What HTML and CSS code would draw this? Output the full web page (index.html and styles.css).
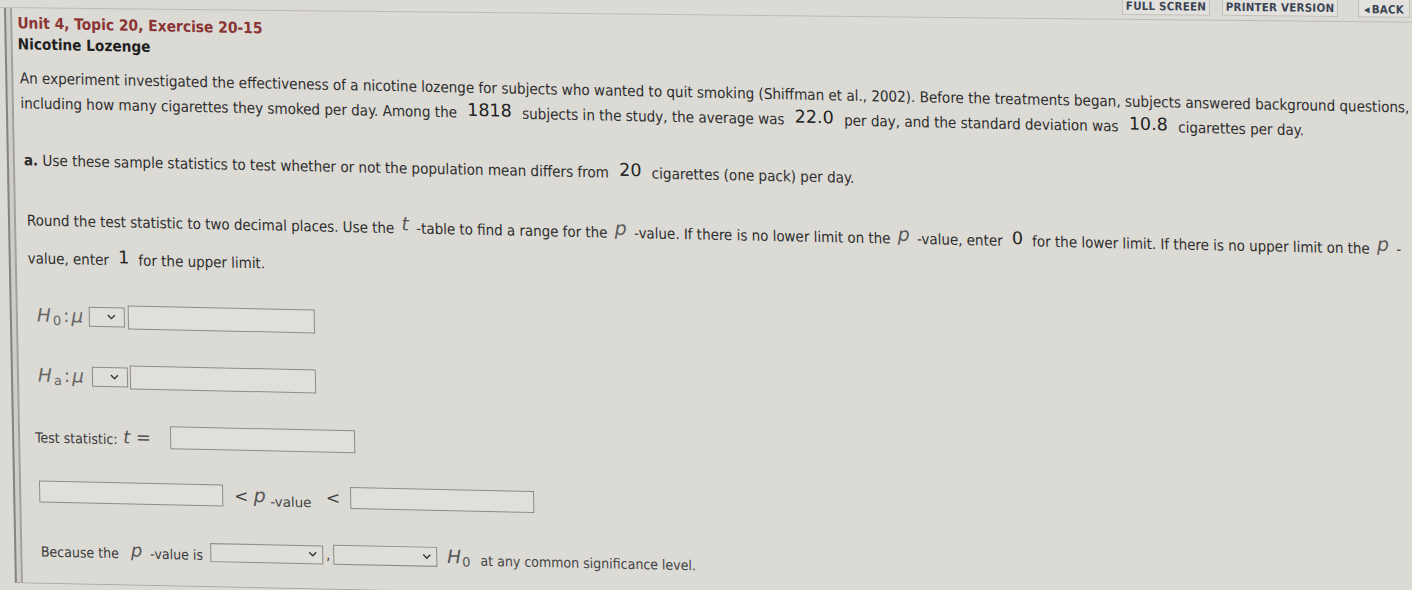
FILE: index.html
```html
<!DOCTYPE html>
<html lang="en">
<head>
<meta charset="utf-8">
<title>Unit 4, Topic 20, Exercise 20-15</title>
<link rel="stylesheet" href="styles.css">
</head>
<body>
<div class="topbar">
  <span class="tb-btn w-full">FULL SCREEN</span>
  <span class="tb-btn w-print">PRINTER VERSION</span>
  <span class="tb-btn w-back"><span class="tri">&#9664;</span>BACK</span>
</div>
<div class="panel">
  <div class="inner">
    <h1 class="unit">Unit 4, Topic 20, Exercise 20-15</h1>
    <h2 class="name">Nicotine Lozenge</h2>
    <p class="intro">An experiment investigated the effectiveness of a nicotine lozenge for subjects who wanted to quit smoking (Shiffman et al., 2002). Before the treatments began, subjects answered background questions,<br>including how many cigarettes they smoked per day. Among the <span class="num">1818</span> subjects in the study, the average was <span class="num">22.0</span> per day, and the standard deviation was <span class="num">10.8</span> cigarettes per day.</p>
    <p class="part"><b>a.</b> Use these sample statistics to test whether or not the population mean differs from <span class="num">20</span> cigarettes (one pack) per day.</p>
    <p class="instr">Round the test statistic to two decimal places. Use the <span class="mi">t</span> -table to find a range for the <span class="mi">p</span> -value. If there is no lower limit on the <span class="mi">p</span> -value, enter <span class="num">0</span> for the lower limit. If there is no upper limit on the <span class="mi">p</span> -<br>value, enter <span class="num">1</span> for the upper limit.</p>

    <div class="row row-h0">
      <span class="hyp lab-h0"><i>H</i><sub>0</sub>:<i>μ</i></span>
      <span class="drop d-small"><svg class="chev" width="9" height="6" viewBox="0 0 9 6"><polyline points="1,1 4.5,4.5 8,1" fill="none" stroke="#333" stroke-width="1.4"/></svg></span>
      <span class="box b-hyp"></span>
    </div>

    <div class="row row-ha">
      <span class="hyp lab-ha"><i>H</i><sub>a</sub>:<i>μ</i></span>
      <span class="drop d-small"><svg class="chev" width="9" height="6" viewBox="0 0 9 6"><polyline points="1,1 4.5,4.5 8,1" fill="none" stroke="#333" stroke-width="1.4"/></svg></span>
      <span class="box b-hyp"></span>
    </div>

    <div class="row row-t">
      <span class="lab-test">Test statistic:</span>
      <span class="teq"><i>t</i> =</span>
      <span class="box b-t"></span>
    </div>

    <div class="row row-p">
      <span class="box b-p"></span>
      <span class="pmid"><span class="lt">&lt;</span> <i class="pi">p</i> <span class="sub-val">-value</span> <span class="lt">&lt;</span></span>
      <span class="box b-p"></span>
    </div>

    <div class="row row-because">
      <span class="lab-because">Because the <i class="pi2">p</i> -value is</span>
      <span class="drop d-sel1"><svg class="chev" width="9" height="6" viewBox="0 0 9 6"><polyline points="1,1 4.5,4.5 8,1" fill="none" stroke="#333" stroke-width="1.4"/></svg></span>
      <span class="comma">,</span>
      <span class="drop d-sel2"><svg class="chev" width="9" height="6" viewBox="0 0 9 6"><polyline points="1,1 4.5,4.5 8,1" fill="none" stroke="#333" stroke-width="1.4"/></svg></span>
      <span class="hyp h-end"><i>H</i><sub>0</sub></span>
      <span class="tail">at any common significance level.</span>
    </div>
  </div>
</div>
</body>
</html>
```

FILE: styles.css
```css
html, body {
  margin: 0;
  padding: 0;
  overflow: hidden;
}
body {
  width: 1412px;
  height: 590px;
  background: #dcdad5;
  font-family: "DejaVu Sans Condensed", "DejaVu Sans", sans-serif;
  font-stretch: condensed;
  color: #2e2e2e;
}

/* top bar */
.topbar {
  height: 7px;
  border-bottom: 1px solid #bdbbb6;
  display: flex;
  justify-content: flex-end;
  align-items: flex-end;
  padding-right: 2px;
  transform: skewY(0.6deg);
  transform-origin: 0 0;
}
.tb-btn {
  height: 20px;
  margin-bottom: 4px;
  box-sizing: border-box;
  display: flex;
  align-items: center;
  justify-content: center;
  background: #e3e1dd;
  border: 1px solid #c2c0bb;
  border-top: none;
  font-size: 11.5px;
  font-weight: bold;
  color: #3b4454;
  letter-spacing: 0.2px;
  padding-top: 2px;
}
.w-full { width: 88px; }
.w-print { width: 116px; margin-left: 12px; }
.w-back { width: 52px; margin-left: 20px; padding-top: 5px; }
.tri { font-size: 8px; margin-right: 2px; }

/* panel */
.panel {
  margin-left: 4px;
  height: 575px;
  box-sizing: border-box;
  border-left: 2px solid #85837f;
  border-bottom: 1px solid #a9a7a3;
  background: #cfcdc8;
  padding-left: 4px;
  transform: matrix(1, 0.021, 0.019, 1, 0, 0);
  transform-origin: 0 0;
}
.inner {
  height: 100%;
  box-sizing: border-box;
  border-left: 2px solid #a3a19d;
  background: #dcdad5;
  padding: 6px 0 0 5px;
}

.unit, .name {
  margin: 0;
  font-weight: bold;
  line-height: 18px;
}
.unit { color: #8a3434; font-size: 15.4px; }
.name { color: #1f1f1f; font-size: 15.2px; margin-top: 3px; }

.intro, .part, .instr {
  margin: 0;
  font-size: 15.05px;
  white-space: nowrap;
}
.intro { line-height: 25px; margin: 13px 0 0 1.5px; }
.part { line-height: 25px; margin: 32px 0 0 4px; }
.instr { line-height: 38px; margin: 28px 0 0 6px; font-size: 14.95px; }

.num {
  font-family: "DejaVu Sans", sans-serif;
  font-stretch: normal;
  font-size: 17.5px;
  line-height: 1;
  color: #222;
  margin: 0 6px;
  vertical-align: 2px;
}
.instr .num { margin: 0 5px; }
.mi {
  font-family: "DejaVu Sans", sans-serif;
  font-stretch: normal;
  font-style: italic;
  font-size: 19px;
  line-height: 1;
  color: #5a5a5a;
  margin: 0 3px;
  vertical-align: 3px;
}

/* answer rows */
.row {
  display: flex;
  align-items: center;
  font-size: 14px;
  color: #3a3a3a;
}
.row-h0 { height: 26px; margin: 25px 0 0 14px; }
.row-ha { height: 26px; margin: 34px 0 0 14px; }
.row-t { height: 26px; margin: 33px 0 0 10px; }
.row-p { height: 24px; margin: 32px 0 0 13px; }
.row-because { height: 24px; margin: 33px 0 0 13.5px; }

.hyp {
  font-family: "DejaVu Sans", sans-serif;
  font-stretch: normal;
  font-size: 18.5px;
  color: #666;
  letter-spacing: 2px;
}
.hyp sub {
  font-size: 13px;
  vertical-align: -3px;
}
.lab-h0 { width: 52px; }
.lab-ha { width: 54px; }

.drop {
  box-sizing: border-box;
  border: 1px solid #8d8b87;
  background: #e0ded9;
  display: flex;
  align-items: center;
  justify-content: flex-end;
}
.chev { display: block; margin-right: 8px; }
.d-small { width: 36px; height: 20px; }
.d-sel1 { width: 113px; height: 19px; }
.d-sel2 { width: 104px; height: 20px; }
.d-sel1 .chev, .d-sel2 .chev { margin-right: 5px; }

.box {
  box-sizing: border-box;
  border: 1px solid #8d8b87;
  background: #e1dfdb;
}
.b-hyp { width: 187px; height: 24px; margin-left: 3px; }
.row-ha .b-hyp { margin-left: 2px; width: 186px; }
.b-t { width: 185px; height: 23px; }
.b-p { width: 184px; height: 22px; }

.lab-test { width: 88px; white-space: nowrap; position: relative; top: 3px; }
.teq {
  width: 47px;
  font-family: "DejaVu Sans", sans-serif;
  font-stretch: normal;
  font-size: 18px;
  color: #555;
}

.pmid {
  width: 127px;
  box-sizing: border-box;
  padding-left: 11px;
  font-size: 15px;
  color: #444;
  white-space: nowrap;
}
.lt { font-size: 17px; font-family: "DejaVu Sans", sans-serif; font-stretch: normal; }
.pi {
  font-family: "DejaVu Sans", sans-serif;
  font-stretch: normal;
  font-size: 19px;
  color: #555;
  margin-left: 1px;
}
.sub-val {
  font-family: "DejaVu Sans", sans-serif;
  font-stretch: normal;
  font-size: 13.5px;
  vertical-align: -4px;
  margin-right: 10px;
}

.lab-because { width: 169.5px; white-space: nowrap; }
.pi2 {
  font-family: "DejaVu Sans", sans-serif;
  font-stretch: normal;
  font-size: 18px;
  color: #555;
  margin: 0 4px 0 8px;
  vertical-align: 2px;
}
.comma { width: 10px; text-align: center; }
.h-end { margin-left: 10px; color: #555; letter-spacing: 0; }
.h-end sub { margin-left: 1px; }
.tail { margin-left: 10px; color: #444; white-space: nowrap; position: relative; top: 3px; }
```
